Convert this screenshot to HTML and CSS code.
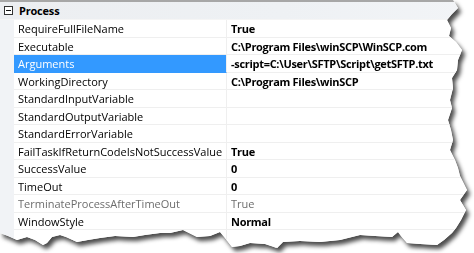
FILE: index.html
```html
<!DOCTYPE html>
<html lang="en">
<head>
    <meta charset="UTF-8">
    <title>Execute Process Task - Properties</title>
    <link rel="stylesheet" href="styles.css">
</head>
<body>
    <div class="sheet">
        <div class="grid">
            <div class="cat">
                <span class="toggle"></span>
                <span class="cat-name">Process</span>
            </div>
            <div class="row"><div class="name">RequireFullFileName</div><div class="value">True</div></div>
            <div class="row"><div class="name">Executable</div><div class="value">C:\Program Files\winSCP\WinSCP.com</div></div>
            <div class="row selected"><div class="name">Arguments</div><div class="value">-script=C:\User\SFTP\Script\getSFTP.txt</div></div>
            <div class="row"><div class="name">WorkingDirectory</div><div class="value">C:\Program Files\winSCP</div></div>
            <div class="row"><div class="name">StandardInputVariable</div><div class="value"></div></div>
            <div class="row"><div class="name">StandardOutputVariable</div><div class="value"></div></div>
            <div class="row"><div class="name">StandardErrorVariable</div><div class="value"></div></div>
            <div class="row"><div class="name">FailTaskIfReturnCodeIsNotSuccessValue</div><div class="value">True</div></div>
            <div class="row"><div class="name">SuccessValue</div><div class="value">0</div></div>
            <div class="row"><div class="name">TimeOut</div><div class="value">0</div></div>
            <div class="row readonly"><div class="name">TerminateProcessAfterTimeOut</div><div class="value">True</div></div>
            <div class="row"><div class="name">WindowStyle</div><div class="value">Normal</div></div>
            <div class="row"><div class="name"></div><div class="value"></div></div>
        </div>
    </div>
</body>
</html>
```

FILE: styles.css
```css
body {
    margin: 0;
    padding: 0;
    background: #fff;
    font-family: "Open Sans", "Noto Sans", sans-serif;
    font-size: 11px;
    color: #000;
}
.sheet {
    width: 474px;
    height: 253px;
    filter: drop-shadow(3px 4px 2px rgba(0, 0, 0, 0.7));
}
.grid {
    width: 470px;
    height: 250px;
    background: #fff;
    border-top: 2px solid #a7a7a7;
    box-sizing: border-box;
    clip-path: polygon(0 0, 453px 0, 458px 8px, 452px 14px, 447px 20px, 451px 28px, 449px 36px, 456px 42px, 462px 50px, 458px 60px, 457px 70px, 452px 78px, 453px 88px, 450px 100px, 452px 108px, 448px 120px, 451px 130px, 453px 140px, 450px 150px, 455px 160px, 458px 168px, 460px 176px, 464px 184px, 467px 190px, 460px 200px, 466px 210px, 461px 220px, 456px 228px, 452px 233px, 444px 240px, 437px 245px, 420px 244px, 407px 243px, 401px 236px, 398px 232px, 392px 237px, 375px 236px, 360px 235px, 340px 240px, 320px 242px, 300px 241px, 283px 242px, 277px 248px, 265px 244px, 250px 243px, 240px 246px, 232px 247px, 225px 238px, 220px 232px, 210px 236px, 197px 237px, 189px 233px, 183px 230px, 170px 233px, 160px 233px, 145px 235px, 133px 237px, 115px 236px, 100px 238px, 88px 240px, 77px 242px, 66px 237px, 60px 235px, 52px 237px, 47px 243px, 43px 245px, 35px 240px, 27px 237px, 17px 240px, 8px 236px, 0 233px);
}
.cat {
    display: flex;
    align-items: center;
    height: 18px;
    background: linear-gradient(to right, #eceef1, #eef1f4 60%, #f2f4f7);
    border-bottom: 1px solid #f5f5f5;
    box-sizing: border-box;
}
.toggle {
    position: relative;
    width: 7px;
    height: 7px;
    margin: 0 6px 0 4px;
    border: 1px solid #333;
    background: #fff;
}
.toggle::after {
    content: "";
    position: absolute;
    left: 1px;
    top: 3px;
    width: 5px;
    height: 1px;
    background: #111;
}
.cat-name {
    font-weight: bold;
    font-size: 11px;
    letter-spacing: -0.2px;
}
.row {
    display: flex;
    height: 17.5px;
    padding-left: 14px;
    background: linear-gradient(to right, #f1f3f6 14px, #fff 14px);
}
.name, .value {
    height: 100%;
    line-height: 17.5px;
    border-bottom: 1px solid #efefef;
    box-sizing: border-box;
    white-space: nowrap;
    overflow: hidden;
}
.name {
    width: 213px;
    padding-left: 4px;
    border-right: 1px solid #efefef;
}
.value {
    flex: 1;
    padding-left: 4px;
    font-weight: bold;
    letter-spacing: -0.3px;
}
.selected .name {
    background: #3399ff;
    color: #fff;
    border-bottom-color: #3399ff;
}
.readonly .name, .readonly .value {
    color: #6d6d6d;
    font-weight: normal;
    letter-spacing: 0;
}
```
